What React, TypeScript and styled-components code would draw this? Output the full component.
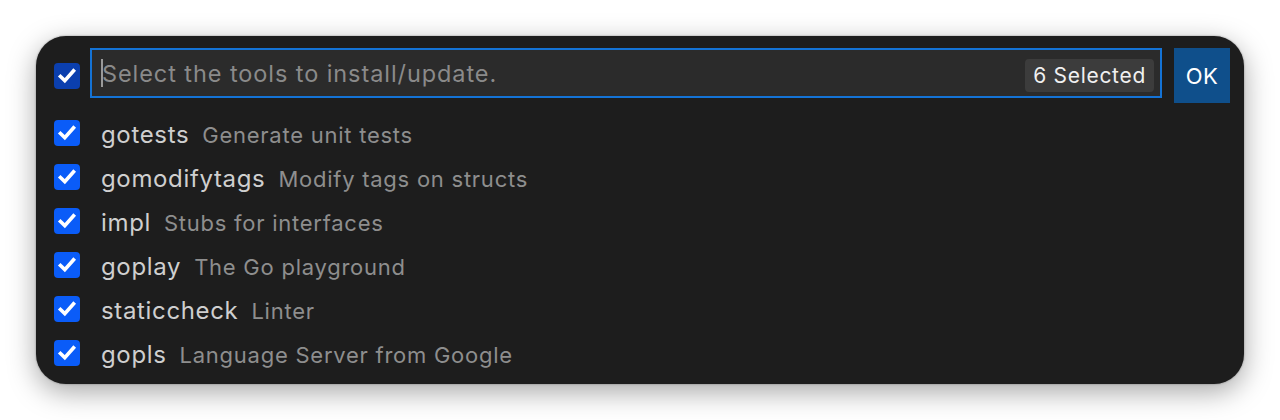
import styled, { createGlobalStyle } from 'styled-components';

const GlobalStyle = createGlobalStyle`
  html, body {
    margin: 0;
    padding: 0;
    background: #ffffff;
  }
  body {
    font-family: Inter, 'Noto Sans', 'Liberation Sans', sans-serif;
  }
`;

const Page = styled.div`
  padding: 36px;
  height: 420px;
  box-sizing: border-box;
`;

const Panel = styled.div`
  height: 348px;
  box-sizing: border-box;
  background: #1d1d1d;
  border-radius: 30px;
  box-shadow: 0 8px 28px rgba(0, 0, 0, 0.35), 0 0 2px rgba(0, 0, 0, 0.4);
  overflow: hidden;
  padding: 12px 14px 0 18px;
  display: flex;
  flex-direction: column;
`;

const Header = styled.div`
  display: flex;
  align-items: flex-start;
  height: 55px;
`;

const Box = styled.div<{ $dim?: boolean }>`
  width: 26px;
  height: 26px;
  flex: 0 0 26px;
  border-radius: 4px;
  background: ${(p) => (p.$dim ? '#0b3fae' : '#0a5cf8')};
  display: flex;
  align-items: center;
  justify-content: center;
`;

const HeaderBox = styled.div`
  margin-top: 15px;
  margin-right: 10px;
`;

const Input = styled.div`
  flex: 1;
  height: 50px;
  box-sizing: border-box;
  border: 2px solid #1473d6;
  background: #2b2b2b;
  display: flex;
  align-items: center;
  padding: 0 6px 0 9px;
  margin-right: 12px;
`;

const Caret = styled.span`
  width: 2px;
  height: 28px;
  background: #9a9a9a;
  margin-right: -1px;
`;

const Placeholder = styled.span`
  flex: 1;
  font-size: 23.5px;
  color: #8a8a8a;
  letter-spacing: 0.92px;
`;

const Badge = styled.span`
  background: #3c3c3c;
  color: #f0f0f0;
  border-radius: 4px;
  font-size: 21px;
  letter-spacing: 0.7px;
  height: 33px;
  display: flex;
  align-items: center;
  padding: 0 8px;
  margin-top: 4px;
`;

const OkButton = styled.button`
  width: 56px;
  height: 55px;
  border: none;
  background: #0f4f8b;
  color: #ffffff;
  font-family: inherit;
  font-size: 22px;
  letter-spacing: 0.5px;
  padding: 0;
`;

const List = styled.div`
  margin-top: 8px;
  display: flex;
  flex-direction: column;
`;

const Row = styled.div`
  height: 44px;
  display: flex;
  align-items: center;
  flex: 0 0 44px;
`;

const Label = styled.span`
  margin: 3px 0 0 21px;
  font-size: 24px;
  letter-spacing: 0.65px;
  color: #cfcfcf;
`;

const Desc = styled.span`
  margin: 3px 0 0 13px;
  font-size: 22px;
  letter-spacing: 0.75px;
  color: #8e8e8e;
`;

function Check({ dim }: { dim?: boolean }) {
  return (
    <Box $dim={dim}>
      <svg width='26' height='26' viewBox='0 0 26 26'>
        <path d='M6.5 13.5 L10.8 17.6 L19.5 7.8' fill='none' stroke='#ffffff' strokeWidth='3.6' strokeLinecap='square' />
      </svg>
    </Box>
  );
}

const tools = [
  { name: 'gotests', desc: 'Generate unit tests' },
  { name: 'gomodifytags', desc: 'Modify tags on structs' },
  { name: 'impl', desc: 'Stubs for interfaces' },
  { name: 'goplay', desc: 'The Go playground' },
  { name: 'staticcheck', desc: 'Linter' },
  { name: 'gopls', desc: 'Language Server from Google' },
];

export default function App() {
  return (
    <>
      <GlobalStyle />
      <Page>
        <Panel>
          <Header>
            <HeaderBox>
              <Check dim />
            </HeaderBox>
            <Input>
              <Caret />
              <Placeholder>Select the tools to install/update.</Placeholder>
              <Badge>6 Selected</Badge>
            </Input>
            <OkButton>OK</OkButton>
          </Header>
          <List>
            {tools.map((t) => (
              <Row key={t.name}>
                <Check />
                <Label>{t.name}</Label>
                <Desc>{t.desc}</Desc>
              </Row>
            ))}
          </List>
        </Panel>
      </Page>
    </>
  );
}
